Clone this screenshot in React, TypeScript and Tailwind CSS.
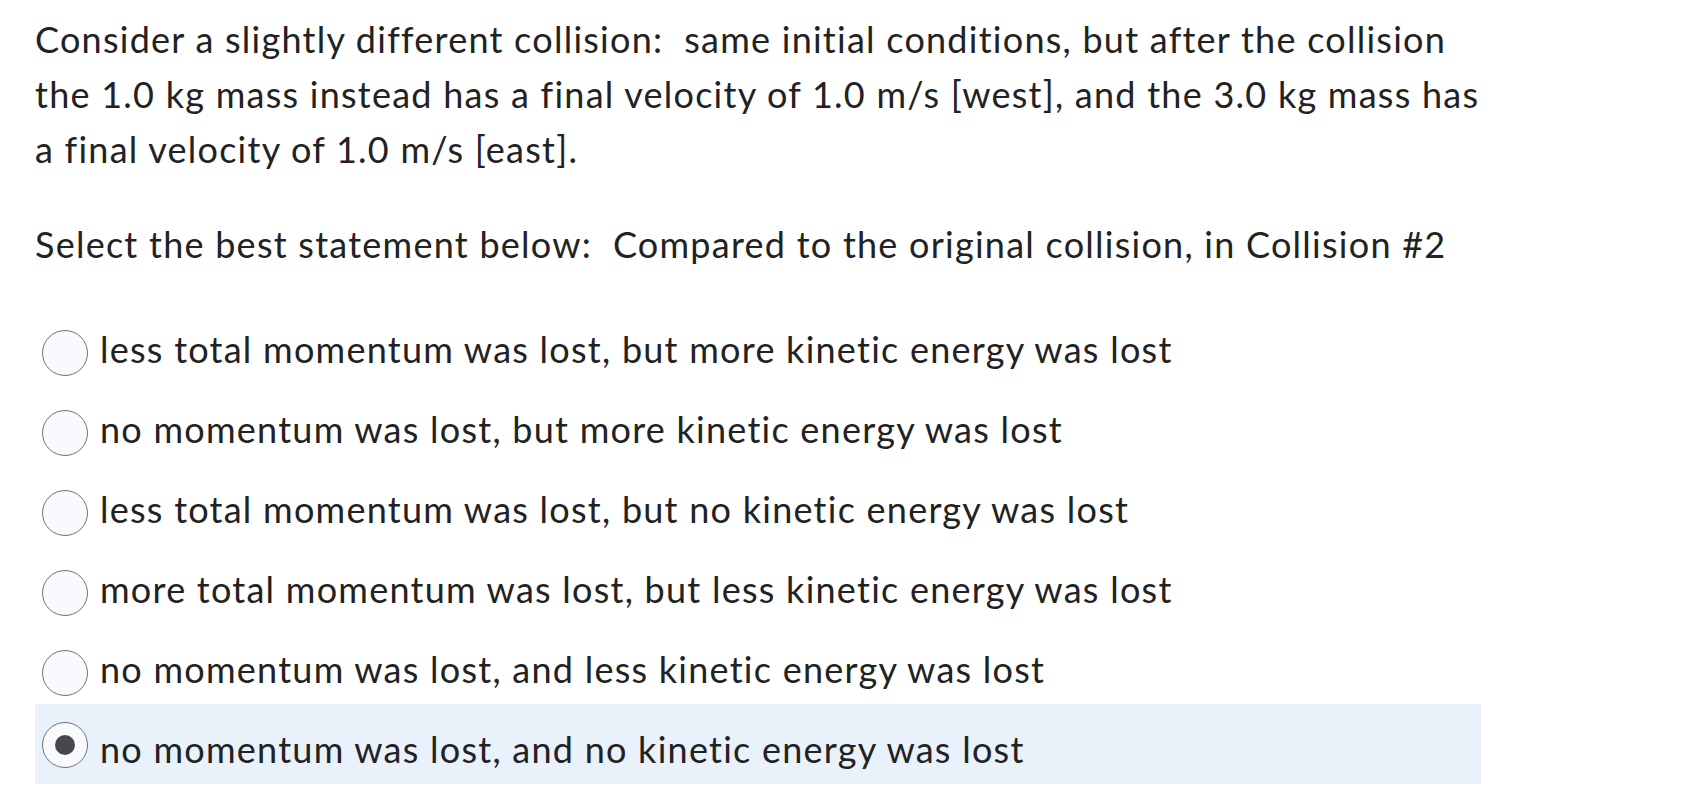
const options = [
  "less total momentum was lost, but more kinetic energy was lost",
  "no momentum was lost, but more kinetic energy was lost",
  "less total momentum was lost, but no kinetic energy was lost",
  "more total momentum was lost, but less kinetic energy was lost",
  "no momentum was lost, and less kinetic energy was lost",
  "no momentum was lost, and no kinetic energy was lost",
]

/** Single answer row with a round radio button */
function AnswerRow({ label, selected }: { label: string; selected: boolean }) {
  return (
    <label
      className={`flex h-[80px] cursor-pointer items-start gap-[12px] pl-[7px] ${
        selected ? "bg-[#e9f1fb]" : ""
      }`}
    >
      <span
        className={`flex h-[46px] w-[46px] shrink-0 items-center justify-center rounded-full border-[1.5px] border-[#6e7176] bg-[#f8fafe] ${
          selected ? "mt-[18px]" : "mt-[26px]"
        }`}
      >
        {selected && <span className="h-[20px] w-[20px] rounded-full bg-[#48484c]" />}
      </span>
      <span className="pt-[18px] leading-[55px] whitespace-nowrap">{label}</span>
    </label>
  )
}

export default function App() {
  const picked = 5

  return (
    <div className="min-h-screen bg-white">
      <div
        className="ml-[35px] w-[1446px] pt-[12px] text-[36px] tracking-[1.25px] text-[#222222] [font-variant-ligatures:none]"
        style={{ fontFamily: "Lato, 'Open Sans', sans-serif" }}
      >
        {/* Question text */}
        <p className="leading-[55px] whitespace-nowrap">
          Consider a slightly different collision:&nbsp; same initial conditions, but after the collision
          <br />
          the 1.0 kg mass instead has a final velocity of 1.0 m/s [west], and the 3.0 kg mass has
          <br />
          a final velocity of 1.0 m/s [east].
        </p>
        <p className="mt-[40px] leading-[55px] whitespace-nowrap">
          Select the best statement below:&nbsp; Compared to the original collision, in Collision #2
        </p>

        {/* Answers */}
        <div role="radiogroup" className="mt-[32px] flex flex-col">
          {options.map((o, i) => (
            <AnswerRow key={i} label={o} selected={i === picked} />
          ))}
        </div>
      </div>
    </div>
  )
}
